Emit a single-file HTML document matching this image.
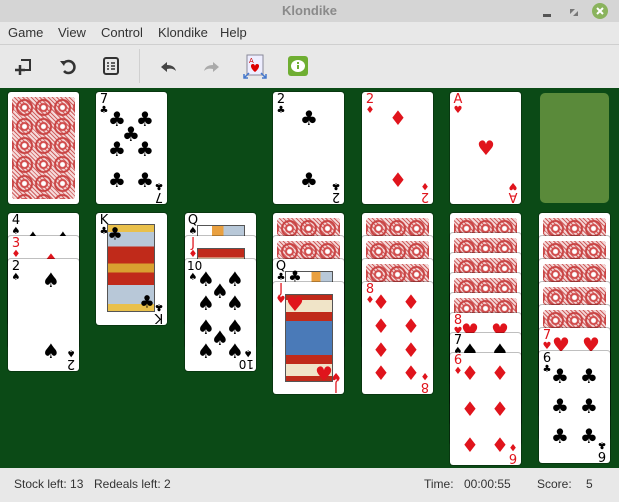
<!DOCTYPE html>
<html><head><meta charset="utf-8"><style>
*{margin:0;padding:0;box-sizing:border-box}
body{width:619px;height:502px;overflow:hidden;background:#e8e8e8;font-family:"Liberation Sans","DejaVu Sans",sans-serif;position:relative}
.title{position:absolute;left:0;top:0;width:619px;height:22px;background:#d5d5d5;color:#8a8a8a;font-weight:bold;font-size:13px;text-align:center;line-height:21px}
.menu{position:absolute;left:0;top:22px;width:619px;height:23px;background:#e8e8e8;border-bottom:1px solid #cfcfcf;font-size:13px;color:#333}
.menu span{position:absolute;top:3px}
.tb{position:absolute;left:0;top:45px;width:619px;height:43px;background:#e8e8e8}
.felt{position:absolute;left:0;top:88px;width:619px;height:380px;background:#0b4a16}
.status{position:absolute;left:0;top:468px;width:619px;height:34px;background:#e8e8e8;font-size:12px;color:#333}
.status span{position:absolute;top:9px}
.c{position:absolute;width:71px;height:112px;background:#fff;border-radius:3px;box-shadow:0 0 0 1px rgba(0,0,0,.25)}
.b::after{content:"";position:absolute;left:4px;top:5px;right:4px;bottom:5px;border-radius:3px;background-color:#e9b8b8;background-image:radial-gradient(circle at 50% 50%,#fff 0 2px,#d04848 3px 4px,transparent 5px),radial-gradient(circle at 50% 50%,transparent 0 6px,#c84040 7px 8px,transparent 9px),repeating-linear-gradient(45deg,#f6dede 0 1px,#cf6060 1px 2px,#f4d4d4 2px 3px),repeating-linear-gradient(-45deg,transparent 0 2px,rgba(200,50,50,.5) 2px 3px);background-size:19px 19px,19px 19px,auto,auto;background-position:3px 1px,3px 1px,0 0,0 0}
.p{position:absolute;font-family:"DejaVu Sans",sans-serif;font-size:20px;line-height:1;transform:translate(-50%,-50%)}
.r{color:#e0141c}.k{color:#000}
.i{position:absolute;left:2px;top:1px;font-family:"DejaVu Sans",sans-serif;font-size:13px;line-height:13px;text-align:center;width:12px}
.i small{display:block;font-size:10px;line-height:10px}
.ib{left:auto;top:auto;right:2px;bottom:1px;transform:rotate(180deg)}
.face{position:absolute;left:12px;top:12px;width:48px;height:88px;border:1px solid #555;overflow:hidden;background:#f7f1e0}
</style></head><body>
<div class="title">Klondike
<svg style="position:absolute;left:537px;top:7px" width="50" height="12"><rect x="6" y="7" width="8" height="3" fill="#555"/><path d="M33 2h5l-5 5zM41 9h-5l5-5z" fill="#777"/></svg>
<svg style="position:absolute;left:591px;top:2px" width="18" height="18"><circle cx="9" cy="9" r="8" fill="#8ab35d"/><path d="M6 6l6 6M12 6l-6 6" stroke="#fff" stroke-width="2"/></svg></div>
<div class="menu"><span style="left:8px">Game</span><span style="left:58px">View</span><span style="left:101px">Control</span><span style="left:158px">Klondike</span><span style="left:220px">Help</span></div>
<div class="tb">
<svg style="position:absolute;left:14px;top:12px" width="20" height="20"><path d="M7 3h9v10h-6" fill="none" stroke="#333" stroke-width="2"/><path d="M6 8v10M1 13h10" stroke="#333" stroke-width="2.5"/></svg>
<svg style="position:absolute;left:58px;top:12px" width="20" height="20"><path d="M6 6a6 6 0 1 1 0 8" fill="none" stroke="#333" stroke-width="2.5"/><path d="M2 4l6 0 -2 5z" fill="#333"/></svg>
<svg style="position:absolute;left:101px;top:11px" width="20" height="20"><rect x="3" y="2" width="14" height="16" rx="2" fill="none" stroke="#333" stroke-width="2"/><path d="M6 7h2M10 7h4M6 10h2M10 10h4M6 13h2M10 13h4" stroke="#333" stroke-width="1.6"/></svg>
<div style="position:absolute;left:139px;top:4px;width:1px;height:34px;background:#d0d0d0"></div>
<svg style="position:absolute;left:158px;top:13px" width="20" height="18"><path d="M3 9l6-5v3c5 0 8 2 9 6-2-2-5-3-9-2v3z" fill="#444"/></svg>
<svg style="position:absolute;left:202px;top:13px" width="20" height="18"><path d="M17 9l-6-5v3c-5 0-8 2-9 6 2-2 5-3 9-2v3z" fill="#aaa"/></svg>
<svg style="position:absolute;left:243px;top:8px" width="24" height="26"><rect x="4" y="2" width="16" height="20" fill="#eef" stroke="#889"/><text x="6" y="10" font-size="7" fill="#c00">A</text><path d="M12 19c-5-4-5-8-2-8 1 0 2 1 2 2 0-1 1-2 2-2 3 0 3 4-2 8z" fill="#d00"/><path d="M1 25l5-5M1 21v4h4M23 25l-5-5M23 21v4h-4" stroke="#47c" stroke-width="1.5" fill="none"/></svg>
<svg style="position:absolute;left:287px;top:10px" width="22" height="22"><rect x="1" y="1" width="20" height="20" rx="3" fill="#6fae32"/><ellipse cx="11" cy="11" rx="7" ry="6" fill="#fff"/><path d="M11 7v2M11 10v4" stroke="#6fae32" stroke-width="2"/></svg>
</div>
<div class="felt"></div>

<div class="c b" style="left:8px;top:92px"></div>
<div class="c" style="left:96px;top:92px"><div class="i k">7<small>♣</small></div><div class="i ib k">7<small>♣</small></div>
<span class="p k" style="left:21px;top:27px">♣</span><span class="p k" style="left:49px;top:27px">♣</span><span class="p k" style="left:35px;top:42px">♣</span><span class="p k" style="left:21px;top:57px">♣</span><span class="p k" style="left:49px;top:57px">♣</span><span class="p k" style="left:21px;top:88px">♣</span><span class="p k" style="left:49px;top:88px">♣</span></div>
<div class="c" style="left:273px;top:92px"><div class="i k">2<small>♣</small></div><div class="i ib k">2<small>♣</small></div><span class="p k" style="left:36px;top:26px">♣</span><span class="p k" style="left:36px;top:88px">♣</span></div>
<div class="c" style="left:362px;top:92px"><div class="i r">2<small>♦</small></div><div class="i ib r">2<small>♦</small></div><span class="p r" style="left:36px;top:26px">♦</span><span class="p r" style="left:36px;top:88px">♦</span></div>
<div class="c" style="left:450px;top:92px"><div class="i r">A<small>♥</small></div><div class="i ib r">A<small>♥</small></div><span class="p r" style="left:36px;top:56px">♥</span></div>
<div style="position:absolute;left:540px;top:93px;width:69px;height:110px;background:#5a8a3a;border-radius:5px"></div>

<div class="c" style="left:8px;top:213px"><div class="i k">4<small>♠</small></div><span class="p k" style="left:25px;top:26px">♠</span><span class="p k" style="left:55px;top:26px">♠</span></div>
<div class="c" style="left:8px;top:236px"><div class="i r">3<small>♦</small></div><span class="p r" style="left:43px;top:25px">♦</span></div>
<div class="c" style="left:8px;top:259px"><div class="i k">2<small>♠</small></div><div class="i ib k">2<small>♠</small></div><span class="p k" style="left:43px;top:21px">♠</span><span class="p k" style="left:43px;top:92px">♠</span></div>
<div class="c" style="left:96px;top:213px"><div class="i k">K<small>♣</small></div><div class="i ib k">K<small>♣</small></div><div class="face" style="left:11px;top:11px;background:linear-gradient(#e9c04b 0 8%,#b8c8d8 8% 25%,#c02a1a 25% 45%,#d9a030 45% 55%,#c02a1a 55% 70%,#b8c8d8 70% 92%,#e9c04b 92%)"></div><span class="p k" style="left:19px;top:22px;font-size:17px">♣</span><span class="p k" style="left:51px;top:90px;font-size:17px">♣</span></div>
<div class="c" style="left:185px;top:213px"><div class="i k">Q<small>♠</small></div><div class="face" style="background:linear-gradient(90deg,#fff 0 30%,#e9a040 30% 55%,#b8c8d8 55%)"></div></div>
<div class="c" style="left:185px;top:236px"><div class="i r">J<small>♦</small></div><div class="face" style="background:linear-gradient(#c02a1a 0 10%,#f0e0c0 10%)"></div></div>
<div class="c" style="left:185px;top:259px"><div class="i k" style="font-size:12px">10<small>♠</small></div><div class="i ib k" style="font-size:12px">10<small>♠</small></div>
<span class="p k" style="left:21px;top:20px">♠</span><span class="p k" style="left:50px;top:20px">♠</span><span class="p k" style="left:35px;top:32px">♠</span><span class="p k" style="left:21px;top:44px">♠</span><span class="p k" style="left:50px;top:44px">♠</span><span class="p k" style="left:21px;top:68px">♠</span><span class="p k" style="left:50px;top:68px">♠</span><span class="p k" style="left:35px;top:79px">♠</span><span class="p k" style="left:21px;top:92px">♠</span><span class="p k" style="left:50px;top:92px">♠</span></div>
<div class="c b" style="left:273px;top:213px"></div>
<div class="c b" style="left:273px;top:236px"></div>
<div class="c" style="left:273px;top:259px"><div class="i k">Q<small>♣</small></div><div class="face" style="background:linear-gradient(90deg,#fff 0 55%,#e9a040 55% 75%,#b8c8d8 75%)"></div><span class="p k" style="left:22px;top:18px;font-size:15px">♣</span></div>
<div class="c" style="left:273px;top:282px"><div class="i r">J<small>♥</small></div><div class="i ib r">J<small>♥</small></div><div class="face" style="background:linear-gradient(#c02a1a 0 6%,#f0e4c8 6% 20%,#c02a1a 20% 30%,#4a7ab8 30% 70%,#c02a1a 70% 80%,#f0e4c8 80% 94%,#c02a1a 94%)"></div><span class="p r" style="left:22px;top:22px">♥</span><span class="p r" style="left:51px;top:92px">♥</span></div>
<div class="c b" style="left:362px;top:213px"></div>
<div class="c b" style="left:362px;top:236px"></div>
<div class="c b" style="left:362px;top:259px"></div>
<div class="c" style="left:362px;top:282px"><div class="i r">8<small>♦</small></div><div class="i ib r">8<small>♦</small></div>
<span class="p r" style="left:19px;top:20px">♦</span><span class="p r" style="left:49px;top:20px">♦</span><span class="p r" style="left:19px;top:44px">♦</span><span class="p r" style="left:49px;top:44px">♦</span><span class="p r" style="left:19px;top:68px">♦</span><span class="p r" style="left:49px;top:68px">♦</span><span class="p r" style="left:19px;top:91px">♦</span><span class="p r" style="left:49px;top:91px">♦</span></div>
<div class="c b" style="left:450px;top:213px"></div>
<div class="c b" style="left:450px;top:233px"></div>
<div class="c b" style="left:450px;top:253px"></div>
<div class="c b" style="left:450px;top:273px"></div>
<div class="c b" style="left:450px;top:293px"></div>
<div class="c" style="left:450px;top:313px"><div class="i r">8<small>♥</small></div><span class="p r" style="left:20px;top:18px">♥</span><span class="p r" style="left:50px;top:18px">♥</span></div>
<div class="c" style="left:450px;top:333px"><div class="i k">7<small>♠</small></div><span class="p k" style="left:20px;top:18px">♠</span><span class="p k" style="left:50px;top:18px">♠</span></div>
<div class="c" style="left:450px;top:353px"><div class="i r">6<small>♦</small></div><div class="i ib r">6<small>♦</small></div>
<span class="p r" style="left:20px;top:20px">♦</span><span class="p r" style="left:50px;top:20px">♦</span><span class="p r" style="left:20px;top:56px">♦</span><span class="p r" style="left:50px;top:56px">♦</span><span class="p r" style="left:20px;top:92px">♦</span><span class="p r" style="left:50px;top:92px">♦</span></div>
<div class="c b" style="left:539px;top:213px"></div>
<div class="c b" style="left:539px;top:236px"></div>
<div class="c b" style="left:539px;top:259px"></div>
<div class="c b" style="left:539px;top:282px"></div>
<div class="c b" style="left:539px;top:305px"></div>
<div class="c" style="left:539px;top:328px"><div class="i r">7<small>♥</small></div><span class="p r" style="left:22px;top:17px">♥</span><span class="p r" style="left:52px;top:17px">♥</span></div>
<div class="c" style="left:539px;top:351px"><div class="i k">6<small>♣</small></div><div class="i ib k">6<small>♣</small></div>
<span class="p k" style="left:21px;top:25px">♣</span><span class="p k" style="left:50px;top:25px">♣</span><span class="p k" style="left:21px;top:55px">♣</span><span class="p k" style="left:50px;top:55px">♣</span><span class="p k" style="left:21px;top:85px">♣</span><span class="p k" style="left:50px;top:85px">♣</span></div>

<div class="status"><span style="left:14px">Stock left: 13</span><span style="left:94px">Redeals left: 2</span><span style="left:424px">Time:</span><span style="left:464px">00:00:55</span><span style="left:537px">Score:</span><span style="left:586px">5</span></div>
</body></html>
